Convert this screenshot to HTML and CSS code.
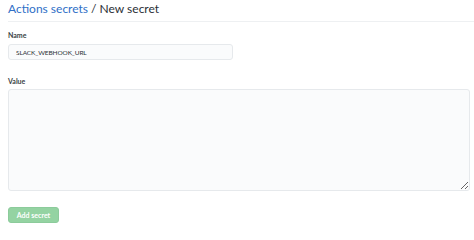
FILE: index.html
```html
<!DOCTYPE html>
<html>
<head>
<meta charset="utf-8">
<link rel="stylesheet" href="styles.css">
</head>
<body>
<div class="page">
  <div class="header">
    <h2 class="title"><a class="crumb" href="#">Actions secrets</a> / New secret</h2>
  </div>
  <form class="form">
    <div class="group">
      <label class="label">Name</label>
      <input class="input" type="text" value="SLACK_WEBHOOK_URL">
    </div>
    <div class="group">
      <label class="label">Value</label>
      <textarea class="textarea"></textarea>
    </div>
    <button class="btn" type="button" disabled>Add secret</button>
  </form>
</div>
</body>
</html>
```
FILE: styles.css
```css
* { box-sizing: border-box; }
html, body { margin: 0; padding: 0; background: #fff; }
body {
  font-family: Lato, "Open Sans", "Liberation Sans", sans-serif;
  color: #24292e;
}
.page { padding: 0 0 0 8px; }
.header {
  border-bottom: 1px solid #eef0f2;
  height: 22px;
  margin-bottom: 8px;
}
.title {
  margin: 0;
  font-size: 12px;
  font-weight: 400;
  line-height: 17px;
  color: #2b3036;
}
.crumb { color: #2f6fc7; text-decoration: none; }
.form { display: flex; flex-direction: column; align-items: flex-start; }
.group { display: flex; flex-direction: column; width: 100%; }
.group + .group { margin-top: 15px; }
.label {
  font-size: 7px;
  font-weight: 700;
  line-height: 10px;
  margin-bottom: 4px;
  color: #3a3f45;
}
.group + .group .label { margin-bottom: 3px; }
.input {
  display: block;
  width: 225px;
  height: 16px;
  padding: 0 7px;
  font-family: inherit;
  font-size: 6.5px;
  letter-spacing: -0.1px;
  color: #2b3036;
  background: #fafbfc;
  border: 1px solid #e6e9ec;
  border-radius: 3px;
  outline: none;
}
.group:first-child { margin-bottom: 1px; }
.textarea {
  display: block;
  width: 462px;
  height: 102px;
  margin-top: 0;
  background: #fafbfc;
  border: 1px solid #e6e9ec;
  border-radius: 3px;
  resize: vertical;
}
.btn {
  margin-top: 16px;
  width: 51px;
  height: 16px;
  padding: 0;
  font-family: inherit;
  font-size: 7px;
  font-weight: 700;
  color: #fff;
  background: #94d3a2;
  border: 1px solid #8ccb9b;
  border-radius: 3px;
}
```
